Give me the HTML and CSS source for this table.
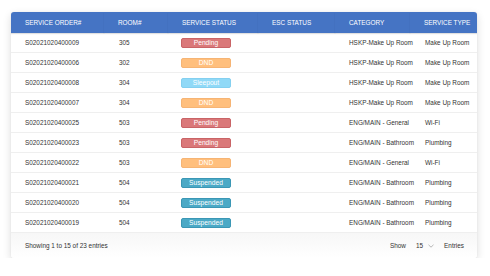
FILE: index.html
```html
<!DOCTYPE html>
<html lang="en">
<head>
  <meta charset="UTF-8" />
  <title>Service Orders</title>
  <link rel="stylesheet" href="styles.css">
</head>
<body>

  <div class="card">
    <table class="orders">
      <colgroup>
        <col class="c-order"><col class="c-room"><col class="c-status">
        <col class="c-esc"><col class="c-cat"><col class="c-type">
      </colgroup>
      <thead>
        <tr>
          <th>SERVICE ORDER#</th>
          <th>ROOM#</th>
          <th>SERVICE STATUS</th>
          <th>ESC STATUS</th>
          <th>CATEGORY</th>
          <th>SERVICE TYPE</th>
        </tr>
      </thead>
      <tbody>
        <tr><td>S02021020400009</td><td class="room">305</td><td><span class="badge pending">Pending</span></td><td></td><td>HSKP-Make Up Room</td><td class="type">Make Up Room</td></tr>
        <tr><td>S02021020400006</td><td class="room">302</td><td><span class="badge dnd">DND</span></td><td></td><td>HSKP-Make Up Room</td><td class="type">Make Up Room</td></tr>
        <tr><td>S02021020400008</td><td class="room">304</td><td><span class="badge sleepout">Sleepout</span></td><td></td><td>HSKP-Make Up Room</td><td class="type">Make Up Room</td></tr>
        <tr><td>S02021020400007</td><td class="room">304</td><td><span class="badge dnd">DND</span></td><td></td><td>HSKP-Make Up Room</td><td class="type">Make Up Room</td></tr>
        <tr><td>S02021020400025</td><td class="room">503</td><td><span class="badge pending">Pending</span></td><td></td><td>ENG/MAIN - General</td><td class="type">Wi-Fi</td></tr>
        <tr><td>S02021020400023</td><td class="room">503</td><td><span class="badge pending">Pending</span></td><td></td><td>ENG/MAIN - Bathroom</td><td class="type">Plumbing</td></tr>
        <tr><td>S02021020400022</td><td class="room">503</td><td><span class="badge dnd">DND</span></td><td></td><td>ENG/MAIN - General</td><td class="type">Wi-Fi</td></tr>
        <tr><td>S02021020400021</td><td class="room">504</td><td><span class="badge suspended">Suspended</span></td><td></td><td>ENG/MAIN - Bathroom</td><td class="type">Plumbing</td></tr>
        <tr><td>S02021020400020</td><td class="room">504</td><td><span class="badge suspended">Suspended</span></td><td></td><td>ENG/MAIN - Bathroom</td><td class="type">Plumbing</td></tr>
        <tr><td>S02021020400019</td><td class="room">504</td><td><span class="badge suspended">Suspended</span></td><td></td><td>ENG/MAIN - Bathroom</td><td class="type">Plumbing</td></tr>
      </tbody>
    </table>

    <div class="footer">
      <span>Showing 1 to 15 of 23 entries</span>
      <div class="pager">
        <span>Show</span>
        <span class="select">15
          <svg width="6" height="4" viewBox="0 0 6 4"><path d="M0.5 0.8 L3 3.2 L5.5 0.8" fill="none" stroke="#999" stroke-width="0.7"/></svg>
        </span>
        <span>Entries</span>
      </div>
    </div>
  </div>

</body>
</html>
```

FILE: styles.css
```css
body {
  margin: 0;
  padding: 12px 13px 0 11px;
  background: #fff;
  font-family: "Liberation Sans", Arial, sans-serif;
  color: #333;
}

.card {
  width: 466px;
  background: #fff;
  border-radius: 3px;
  box-shadow: 0 3px 8px rgba(0, 0, 0, 0.14), 0 0 2px rgba(0, 0, 0, 0.06);
  overflow: hidden;
}

.orders {
  width: 100%;
  border-collapse: collapse;
  table-layout: fixed;
  font-size: 6.4px;
}

.c-order { width: 93px; }
.c-room { width: 64px; }
.c-status { width: 90px; }
.c-esc { width: 77px; }
.c-cat { width: 75px; }
.c-type { width: 67px; }

.orders th {
  height: 21px;
  padding: 0 0 0 14px;
  background: #4574c4;
  color: #fff;
  font-weight: normal;
  text-align: left;
  box-shadow: 0 1px 1px rgba(0, 0, 0, 0.12);
}

.orders td {
  height: 19px;
  padding: 0 0 0 14px;
  border-bottom: 1px solid #efefef;
  white-space: nowrap;
}

.orders td.room,
.orders td.type {
  padding-left: 15px;
}

.badge {
  display: block;
  box-sizing: border-box;
  width: 50px;
  height: 10px;
  margin-left: -1px;
  border-radius: 2px;
  border: 1px solid transparent;
  color: #fff;
  font-size: 6.7px;
  line-height: 8px;
  text-align: center;
}

.badge.pending {
  background: #da7879;
  border-color: #c96466;
}

.badge.dnd {
  background: #ffbf7d;
  border-color: #f6b474;
}

.badge.sleepout {
  background: #90d9f7;
  border-color: #84d0f0;
}

.badge.suspended {
  background: #4ba9c6;
  border-color: #3b97b5;
}

.footer {
  height: 25px;
  padding: 0 13px 0 14px;
  display: flex;
  align-items: center;
  justify-content: space-between;
  font-size: 6.4px;
  background: linear-gradient(#f7f7f7, #fff);
}

.pager {
  display: flex;
  align-items: center;
  gap: 10px;
}

.select {
  display: flex;
  align-items: center;
  gap: 5px;
}
```
